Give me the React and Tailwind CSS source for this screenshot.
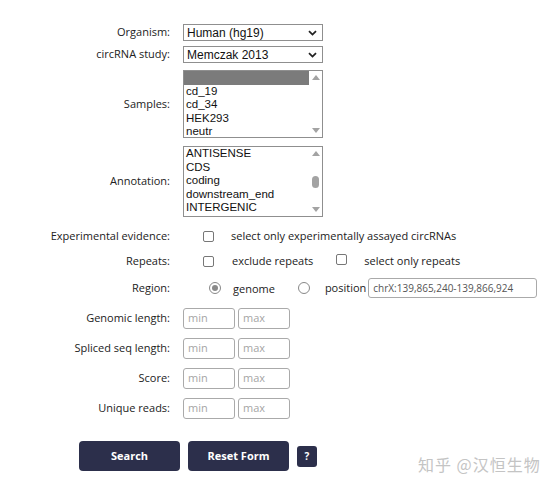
const labelFont = { fontFamily: '"Open Sans", "Noto Sans", sans-serif' };

const Chevron = () => (
  <svg width="9" height="6" viewBox="0 0 9 6" className="shrink-0">
    <path d="M1 1.2 L4.5 4.6 L8 1.2" fill="none" stroke="#222" strokeWidth="1.8" />
  </svg>
);

const Select = ({ value }) => (
  <div className="w-[140px] h-[17px] border border-[#8f8f8f] bg-white flex items-center justify-between pl-[3px] pr-[5px] text-[12px] text-[#111] font-['Liberation_Sans',Arial,sans-serif] leading-none">
    <span>{value}</span>
    <Chevron />
  </div>
);

const ScrollBar = ({ thumb }) => (
  <div className="w-[13px] h-full flex flex-col items-center justify-between py-[4px] relative">
    <svg width="8" height="5" viewBox="0 0 8 5"><path d="M0 5 L4 0 L8 5Z" fill="#a3a3a3" /></svg>
    {thumb && <div className="absolute left-[3px] top-[29px] w-[7px] h-[12px] rounded-[4px] bg-[#a3a3a3]" />}
    <svg width="8" height="5" viewBox="0 0 8 5"><path d="M0 0 L4 5 L8 0Z" fill="#a3a3a3" /></svg>
  </div>
);

const ListBox = ({ items, height, selectedFirst, thumb }) => (
  <div
    className="w-[140px] border border-[#8f8f8f] bg-white flex overflow-hidden"
    style={{ height }}
  >
    <div className="flex-1 overflow-hidden font-['Liberation_Sans',Arial,sans-serif] text-[11.5px] text-[#111]">
      {items.map((it, i) => (
        <div
          key={i}
          className={`h-[13.5px] leading-[13.5px] pl-[2px] ${selectedFirst && i === 0 ? 'bg-[#7b7b7b]' : ''}`}
        >
          {it}
        </div>
      ))}
    </div>
    <ScrollBar thumb={thumb} />
  </div>
);

const Check = () => (
  <span className="w-[11px] h-[11px] border border-[#777] rounded-[2px] bg-white inline-block shrink-0" />
);

const Radio = ({ on }) => (
  <span className="w-[12px] h-[12px] border border-[#888] rounded-full bg-white flex items-center justify-center shrink-0">
    {on && <span className="w-[6px] h-[6px] rounded-full bg-[#8a8a8a]" />}
  </span>
);

const MinMax = () => (
  <div className="flex gap-[3px]">
    {['min', 'max'].map((p) => (
      <div
        key={p}
        className="w-[52px] h-[21px] border border-[#aaa] rounded-[3px] bg-white flex items-center pl-[4px] text-[11px] text-[#a5a5a5]"
        style={labelFont}
      >
        {p}
      </div>
    ))}
  </div>
);

const Row = ({ label, children, className = '' }) => (
  <div className={`flex items-center ${className}`}>
    <div className="w-[170px] shrink-0 text-right text-[11px] text-[#222]" style={labelFont}>
      {label}
    </div>
    <div className="pl-[13px] flex items-center">{children}</div>
  </div>
);

export default function App() {
  return (
    <div className="relative w-[554px] h-[486px] bg-white overflow-hidden pt-[24px]" style={labelFont}>
      <Row label="Organism:">
        <Select value="Human (hg19)" />
      </Row>
      <Row label="circRNA study:" className="mt-[5px]">
        <Select value="Memczak 2013" />
      </Row>
      <Row label="Samples:" className="mt-[7px]">
        <ListBox items={['', 'cd_19', 'cd_34', 'HEK293', 'neutr']} height={68} selectedFirst />
      </Row>
      <Row label="Annotation:" className="mt-[8px]">
        <ListBox
          items={['ANTISENSE', 'CDS', 'coding', 'downstream_end', 'INTERGENIC']}
          height={71}
          thumb
        />
      </Row>

      <Row label="Experimental evidence:" className="mt-[9px] h-[20px]">
        <div className="flex items-center text-[11px] text-[#222] pl-[20px]">
          <Check />
          <span className="ml-[17px]">select only experimentally assayed circRNAs</span>
        </div>
      </Row>
      <Row label="Repeats:" className="mt-[5px] h-[20px]">
        <div className="flex items-center text-[11px] text-[#222] pl-[20px]">
          <Check />
          <span className="ml-[18px]">exclude repeats</span>
          <span className="ml-[23px]"><Check /></span>
          <span className="ml-[17px]">select only repeats</span>
        </div>
      </Row>
      <Row label="Region:" className="mt-[7px] h-[20px]">
        <div className="flex items-center text-[11px] text-[#222] pl-[26px]">
          <Radio on />
          <span className="ml-[12px] mt-[2px]">genome</span>
          <span className="ml-[23px]"><Radio /></span>
          <span className="ml-[15px]">position</span>
          <div className="ml-[2px] w-[169px] h-[20px] border border-[#aaa] rounded-[3px] flex items-center pl-[4px] text-[10px] text-[#555]">
            chrX:139,865,240-139,866,924
          </div>
        </div>
      </Row>
      <Row label="Genomic length:" className="mt-[10px]">
        <MinMax />
      </Row>
      <Row label="Spliced seq length:" className="mt-[9px]">
        <MinMax />
      </Row>
      <Row label="Score:" className="mt-[9px]">
        <MinMax />
      </Row>
      <Row label="Unique reads:" className="mt-[9px]">
        <MinMax />
      </Row>

      <div className="flex items-center gap-[8px] pl-[79px] mt-[22px]">
        <button className="w-[101px] h-[30px] rounded-[4px] bg-[#2c2f4b] text-white text-[11px] font-bold">
          Search
        </button>
        <button className="w-[101px] h-[30px] rounded-[4px] bg-[#2c2f4b] text-white text-[11px] font-bold">
          Reset Form
        </button>
        <button className="w-[20px] h-[21px] rounded-[3px] bg-[#2c2f4b] text-white text-[10px] font-bold">
          ?
        </button>
      </div>

      <div className="absolute left-[418px] top-[452px] text-[16px] text-[#c4c4c4] font-['Noto_Sans_CJK_SC',sans-serif] tracking-[1px]">
        知乎 @汉恒生物
      </div>
    </div>
  );
}
